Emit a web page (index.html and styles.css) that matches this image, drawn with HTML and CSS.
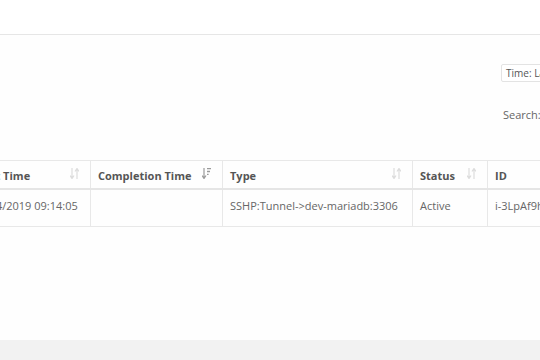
FILE: index.html
```html
<!DOCTYPE html>
<html>
<head>
<meta charset="utf-8">
<link rel="stylesheet" href="styles.css">
</head>
<body>
<div class="page">
  <div class="topbar"></div>
  <div class="content">
    <div class="toolbar">
      <div class="timebox">Time: Last 24 hours</div>
    </div>
    <div class="searchrow">
      <label class="search">Search:</label>
    </div>
    <div class="tablewrap">
      <table class="grid">
        <colgroup>
          <col class="c1"><col class="c2"><col class="c3"><col class="c4"><col class="c5">
        </colgroup>
        <thead>
          <tr>
            <th><span>Start Time</span><svg class="sort" width="9" height="11" viewBox="0 0 9 11"><path d="M2 0v10M0 7.5l2 3 2-3M7 11V1M5 3.5l2-3 2 3" fill="none" stroke="currentColor" stroke-width="1.2"/></svg></th>
            <th><span>Completion Time</span><svg class="sort active" width="9" height="11" viewBox="0 0 9 11"><path d="M2 0v10M0 7.5l2 3 2-3" fill="none" stroke="currentColor" stroke-width="1.2"/><path d="M5 0.7h4M5 3.5h3M5 6.3h1.6" fill="none" stroke="currentColor" stroke-width="1.3"/></svg></th>
            <th><span>Type</span><svg class="sort" width="9" height="11" viewBox="0 0 9 11"><path d="M2 0v10M0 7.5l2 3 2-3M7 11V1M5 3.5l2-3 2 3" fill="none" stroke="currentColor" stroke-width="1.2"/></svg></th>
            <th><span>Status</span><svg class="sort" width="9" height="11" viewBox="0 0 9 11"><path d="M2 0v10M0 7.5l2 3 2-3M7 11V1M5 3.5l2-3 2 3" fill="none" stroke="currentColor" stroke-width="1.2"/></svg></th>
            <th><span>ID</span></th>
          </tr>
        </thead>
        <tbody>
          <tr>
            <td>03/14/2019 09:14:05</td>
            <td></td>
            <td>SSHP:Tunnel-&gt;dev-mariadb:3306</td>
            <td>Active</td>
            <td>i-3LpAf9hXk2</td>
          </tr>
        </tbody>
      </table>
    </div>
  </div>
  <div class="footer"></div>
</div>
</body>
</html>
```
FILE: styles.css
```css
html, body {
  margin: 0;
  padding: 0;
  overflow: hidden;
}
body {
  width: 540px;
  height: 360px;
  font-family: "Open Sans", "Liberation Sans", sans-serif;
  font-size: 11px;
  color: #666;
  background: #fefefe;
}
.page {
  height: 360px;
  display: flex;
  flex-direction: column;
}
.topbar {
  height: 34px;
  background: #fff;
  border-bottom: 1px solid #e6e6e6;
  flex: none;
}
.content {
  flex: 1;
  overflow: hidden;
}
.toolbar {
  display: flex;
  justify-content: flex-start;
  padding: 29px 0 0 501px;
  height: 17px;
  white-space: nowrap;
}
.timebox {
  border: 1px solid #e3e3e3;
  border-radius: 2px;
  padding: 0 4px;
  height: 16px;
  line-height: 16px;
  font-size: 10px;
  color: #555;
  background: #fff;
}
.searchrow {
  padding: 25px 0 0 503px;
  height: 17px;
  line-height: 17px;
  white-space: nowrap;
}
.search {
  color: #666;
}
.tablewrap {
  margin: 37px 0 0 -35px;
  width: 620px;
}
.grid {
  border-collapse: collapse;
  table-layout: fixed;
  width: 620px;
}
.c1 { width: 125px; }
.c2 { width: 132px; }
.c3 { width: 190px; }
.c4 { width: 75px; }
.c5 { width: 98px; }
.grid th, .grid td {
  border: 1px solid #e8e8e8;
  text-align: left;
  white-space: nowrap;
  overflow: hidden;
}
.grid th {
  height: 27px;
  padding: 0 7px;
  font-weight: 700;
  color: #555;
  border-bottom: 2px solid #e5e5e5;
}
.grid th span {
  vertical-align: middle;
}
.sort {
  float: right;
  margin: 2px 4px 0 0;
  color: #dcdcdc;
}
.sort.active {
  color: #9a9a9a;
}
.grid td {
  height: 31px;
  padding: 0 7px 5px;
  color: #666;
}
.footer {
  height: 20px;
  flex: none;
  background: #f2f2f2;
}
```
